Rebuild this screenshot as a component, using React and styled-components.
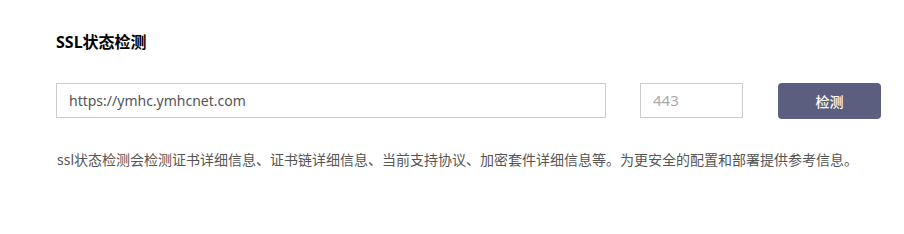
import React from "react";
import styled, { createGlobalStyle } from "styled-components";

const GlobalStyle = createGlobalStyle`
  body {
    margin: 0;
    background: #fff;
    font-family: "Noto Sans", "Noto Sans CJK SC", sans-serif;
  }
`;

export default function App() {
  return (
    <Page>
      <GlobalStyle />
      <Title>SSL状态检测</Title>
      <Row>
        <UrlInput defaultValue="https://ymhc.ymhcnet.com" />
        <PortInput placeholder="443" />
        <CheckButton>检测</CheckButton>
      </Row>
      <Desc>
        ssl状态检测会检测证书详细信息、证书链详细信息、当前支持协议、加密套件详细信息等。为更安全的配置和部署提供参考信息。
      </Desc>
    </Page>
  );
}

const Page = styled.div`
  width: 904px;
  height: 234px;
  box-sizing: border-box;
  padding: 32px 0 0 56px;
`;

const Title = styled.h2`
  margin: 0;
  font-size: 16px;
  line-height: 20px;
  font-weight: 700;
  color: #000;
`;

const Row = styled.div`
  display: flex;
  align-items: flex-start;
  margin-top: 31px;
`;

const Field = styled.input`
  box-sizing: border-box;
  flex-shrink: 0;
  height: 35px;
  border: 1px solid #ccc;
  border-radius: 0;
  padding: 0 12px;
  font-family: "Noto Sans", "Noto Sans CJK SC", sans-serif;
  font-size: 14px;
  color: #555;
  outline: none;
  &::placeholder {
    color: #aaa;
    font-size: 15px;
  }
`;

const UrlInput = styled(Field)`
  width: 550px;
`;

const PortInput = styled(Field)`
  width: 103px;
  margin-left: 34px;
`;

const CheckButton = styled.button`
  box-sizing: border-box;
  flex-shrink: 0;
  width: 103px;
  height: 36px;
  margin-left: 35px;
  border: none;
  border-radius: 4px;
  background: #5c5e80;
  color: #fff;
  font-family: "Noto Sans CJK SC", sans-serif;
  font-size: 14px;
  font-weight: 500;
  cursor: pointer;
`;

const Desc = styled.p`
  margin: 31px 0 0 1px;
  font-size: 14px;
  line-height: 20px;
  color: #555;
`;
